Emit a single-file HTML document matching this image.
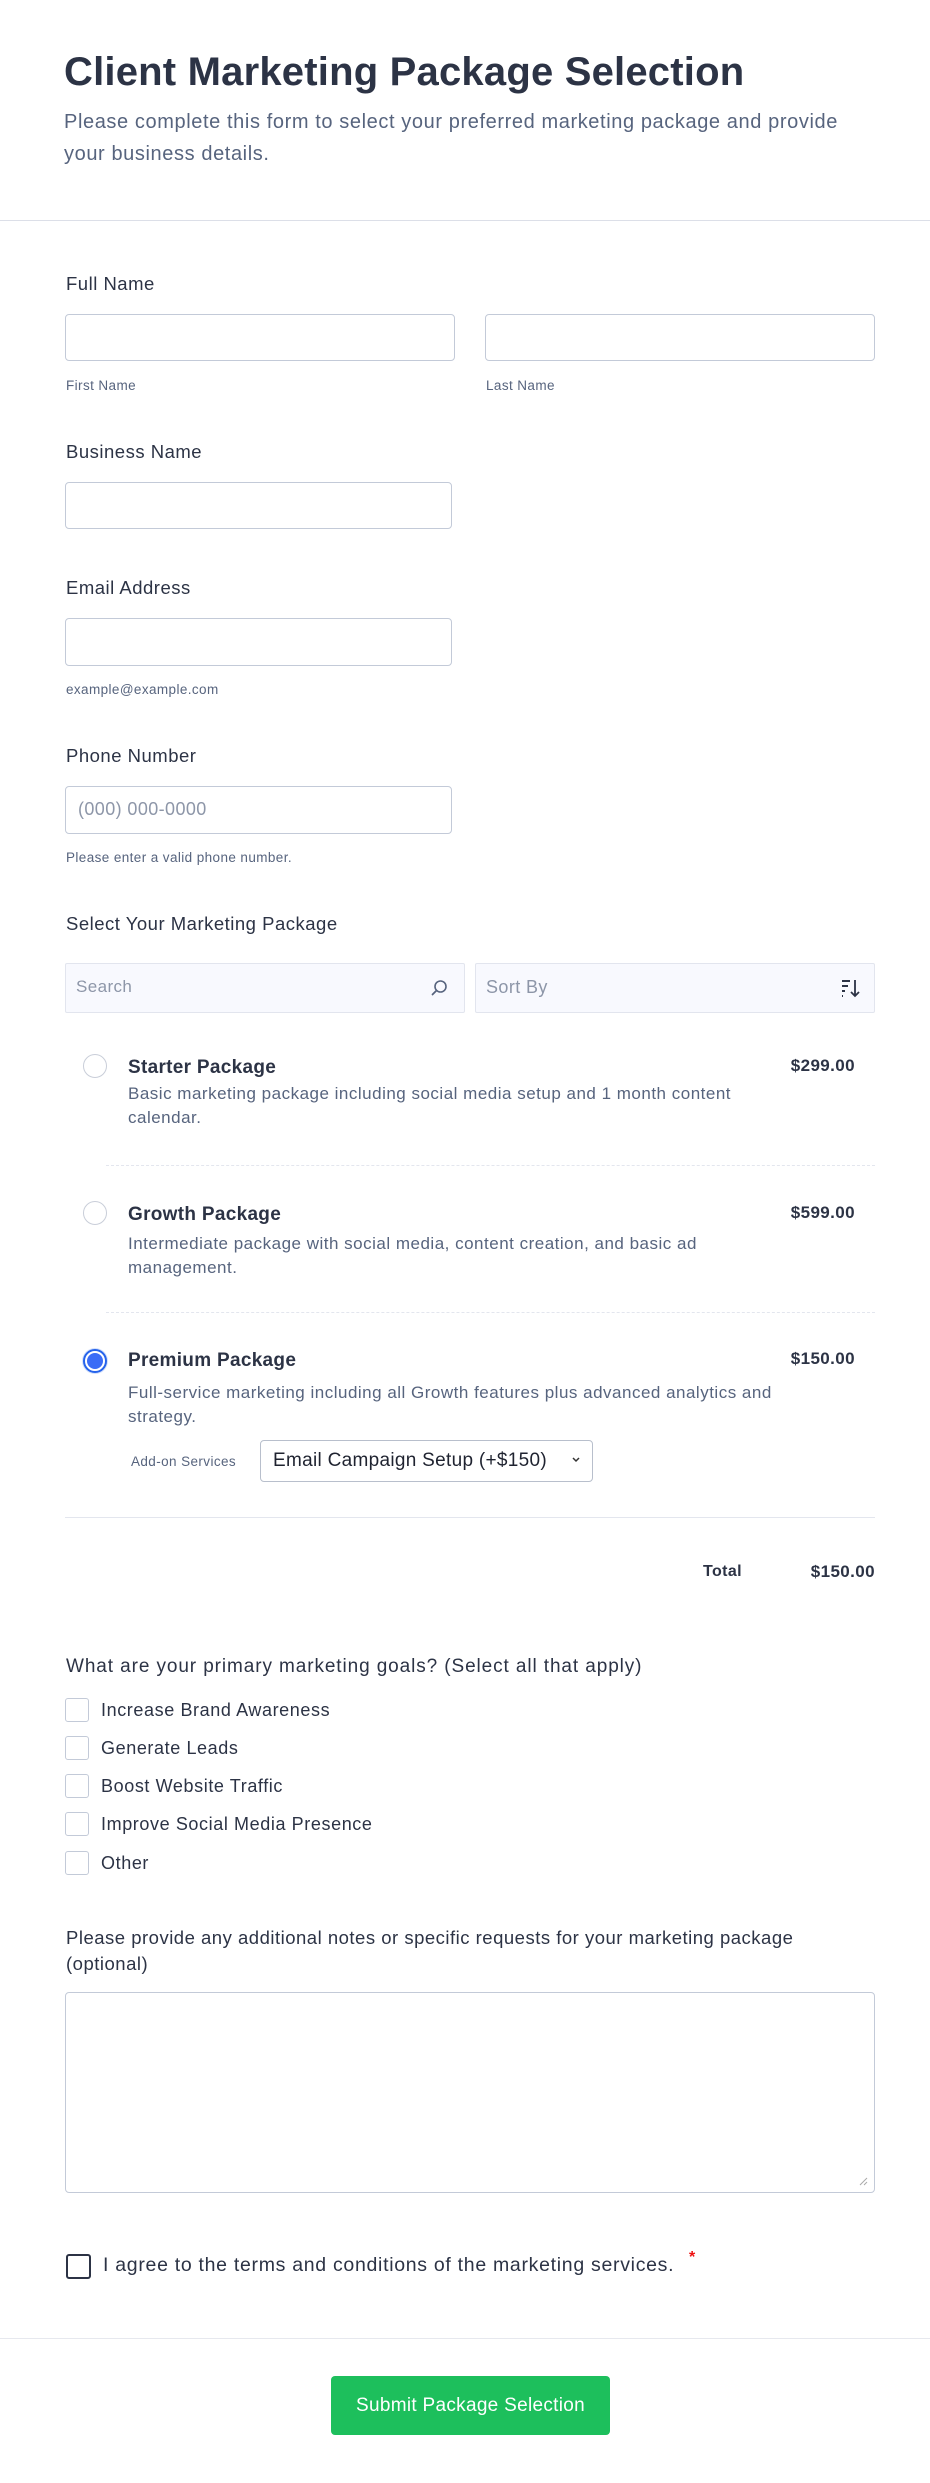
<!DOCTYPE html>
<html><head><meta charset="utf-8"><style>
*{box-sizing:border-box;margin:0;padding:0}
body{width:930px;height:2483px;background:#fff;font-family:"Liberation Sans",sans-serif;color:#2c3345;position:relative;overflow:hidden;letter-spacing:0.4px}
.a{position:absolute;white-space:nowrap}
h1{position:absolute;left:64px;top:50px;font-size:40px;font-weight:bold;color:#2c3345;letter-spacing:0.2px}
.sub{position:absolute;left:64px;top:106px;font-size:20px;line-height:32px;color:#57647e;width:800px;letter-spacing:0.6px}
.hr{position:absolute;left:0;width:930px;height:1px;background:#dcdfe8}
.lbl{font-size:18.5px;color:#2c3345;letter-spacing:0.5px}
.inp{position:absolute;border:1px solid #c3cad8;border-radius:4px;background:#fff}
.sm{font-size:13.5px;color:#57647e}
.ph{font-size:18px;color:#8d96a8}
.radio{position:absolute;width:24px;height:24px;border:1.5px solid #c9ced9;border-radius:50%;background:#fff}
.pt{font-size:19px;font-weight:bold;color:#2c3345;letter-spacing:0.3px}
.pd{font-size:17px;line-height:24px;color:#57647e;white-space:normal;width:640px;letter-spacing:0.5px}
.pr{font-size:17px;font-weight:bold;color:#2c3345;text-align:right}
.dash{position:absolute;left:106px;width:769px;border-top:1px dashed #e3e6ee}
.cb{position:absolute;left:65px;width:24px;height:24px;border:1px solid #c3cad8;border-radius:3px;background:#fff}
.ct{font-size:18px;color:#2c3345;letter-spacing:0.6px}
</style></head><body>
<h1>Client Marketing Package Selection</h1>
<div class="sub">Please complete this form to select your preferred marketing package and provide your business details.</div>
<div class="hr" style="top:220px"></div>

<div class="a lbl" style="left:66px;top:273px">Full Name</div>
<div class="inp" style="left:65px;top:314px;width:390px;height:47px"></div>
<div class="inp" style="left:485px;top:314px;width:390px;height:47px"></div>
<div class="a sm" style="left:66px;top:378px">First Name</div>
<div class="a sm" style="left:486px;top:378px">Last Name</div>

<div class="a lbl" style="left:66px;top:441px">Business Name</div>
<div class="inp" style="left:65px;top:482px;width:387px;height:47px"></div>

<div class="a lbl" style="left:66px;top:577px">Email Address</div>
<div class="inp" style="left:65px;top:618px;width:387px;height:48px"></div>
<div class="a sm" style="left:66px;top:682px">example@example.com</div>

<div class="a lbl" style="left:66px;top:745px">Phone Number</div>
<div class="inp" style="left:65px;top:786px;width:387px;height:48px"></div>
<div class="a ph" style="left:78px;top:799px">(000) 000-0000</div>
<div class="a sm" style="left:66px;top:850px">Please enter a valid phone number.</div>

<div class="a lbl" style="left:66px;top:913px">Select Your Marketing Package</div>
<div class="inp" style="left:65px;top:963px;width:400px;height:50px;background:#f8f9fe;border-color:#e2e5ee;border-radius:2px"></div>
<div class="a ph" style="left:76px;top:977px;font-size:17px">Search</div>
<svg class="a" style="left:429px;top:978px" width="20" height="20" viewBox="0 0 20 20"><circle cx="11.5" cy="8.5" r="5.5" fill="none" stroke="#57647e" stroke-width="1.6"/><path d="M7.5 12.5L3.5 16.5" stroke="#57647e" stroke-width="1.8" stroke-linecap="round"/></svg>
<div class="inp" style="left:475px;top:963px;width:400px;height:50px;background:#f8f9fe;border-color:#e2e5ee;border-radius:2px"></div>
<div class="a ph" style="left:486px;top:977px;font-size:18px">Sort By</div>
<svg class="a" style="left:840px;top:977px" width="22" height="22" viewBox="0 0 22 22"><path d="M2 4h8M2 9h6M2 14h3M2 19h1" stroke="#2c3345" stroke-width="2"/><path d="M15 3v16M11 15l4 4 4-4" fill="none" stroke="#2c3345" stroke-width="1.8"/></svg>

<div class="radio" style="left:83px;top:1054px"></div>
<div class="a pt" style="left:128px;top:1057px">Starter Package</div>
<div class="a pr" style="left:700px;width:155px;top:1056px">$299.00</div>
<div class="a pd" style="left:128px;top:1082px">Basic marketing package including social media setup and 1 month content calendar.</div>
<div class="dash" style="top:1165px"></div>

<div class="radio" style="left:83px;top:1201px"></div>
<div class="a pt" style="left:128px;top:1204px">Growth Package</div>
<div class="a pr" style="left:700px;width:155px;top:1203px">$599.00</div>
<div class="a pd" style="left:128px;top:1232px">Intermediate package with social media, content creation, and basic ad management.</div>
<div class="dash" style="top:1312px"></div>

<div class="radio" style="left:83px;top:1349px;border:2px solid #2563eb;box-shadow:0 0 0 1px #2563eb33"><div style="position:absolute;left:2px;top:2px;width:16px;height:16px;border-radius:50%;background:#3b6cf6"></div></div>
<div class="a pt" style="left:128px;top:1350px">Premium Package</div>
<div class="a pr" style="left:700px;width:155px;top:1349px">$150.00</div>
<div class="a pd" style="left:128px;top:1381px;width:690px">Full-service marketing including all Growth features plus advanced analytics and strategy.</div>
<div class="a sm" style="left:131px;top:1454px">Add-on Services</div>
<div class="inp" style="left:260px;top:1440px;width:333px;height:42px;border-color:#b8bfcc"></div>
<div class="a" style="left:273px;top:1450px;font-size:19px;color:#1f2330;letter-spacing:0.3px">Email Campaign Setup (+$150)</div>
<svg class="a" style="left:571px;top:1456px" width="10" height="8" viewBox="0 0 10 8"><path d="M2 2l3 3 3-3" fill="none" stroke="#333" stroke-width="1.5"/></svg>
<div class="hr" style="top:1517px;left:65px;width:810px;background:#e3e6ee"></div>
<div class="a" style="left:703px;top:1563px;font-size:16px;font-weight:bold">Total</div>
<div class="a pr" style="left:760px;width:115px;top:1562px">$150.00</div>

<div class="a lbl" style="left:66px;top:1656px;font-size:19px;letter-spacing:0.9px">What are your primary marketing goals? (Select all that apply)</div>
<div class="cb" style="top:1698px"></div><div class="a ct" style="left:101px;top:1700px">Increase Brand Awareness</div>
<div class="cb" style="top:1736px"></div><div class="a ct" style="left:101px;top:1738px">Generate Leads</div>
<div class="cb" style="top:1774px"></div><div class="a ct" style="left:101px;top:1776px">Boost Website Traffic</div>
<div class="cb" style="top:1812px"></div><div class="a ct" style="left:101px;top:1814px">Improve Social Media Presence</div>
<div class="cb" style="top:1851px"></div><div class="a ct" style="left:101px;top:1853px">Other</div>

<div class="a lbl" style="left:66px;top:1925px;white-space:normal;width:800px;line-height:26px">Please provide any additional notes or specific requests for your marketing package (optional)</div>
<div class="inp" style="left:65px;top:1992px;width:810px;height:201px"></div>
<svg class="a" style="left:858px;top:2176px" width="10" height="10"><path d="M2 9L9 2M6 9L9 6" stroke="#aaa" stroke-width="1"/></svg>

<div class="a" style="left:66px;top:2254px;width:25px;height:25px;border:2px solid #2c3345;border-radius:3px"></div>
<div class="a" style="left:103px;top:2254px;font-size:19.5px;color:#2c3345;letter-spacing:0.7px">I agree to the terms and conditions of the marketing services.</div>
<div class="a" style="left:689px;top:2249px;font-size:16px;color:#e11;font-weight:bold">*</div>

<div class="hr" style="top:2338px;background:#e6e8ee"></div>
<div class="a" style="left:331px;top:2376px;width:279px;height:59px;background:#1dbf5c;border-radius:4px;color:#fff;font-size:19px;text-align:center;line-height:59px;letter-spacing:0.3px">Submit Package Selection</div>
</body></html>
